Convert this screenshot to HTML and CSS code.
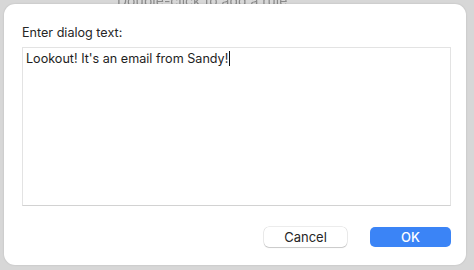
FILE: index.html
```html
<!DOCTYPE html>
<html lang="en">
<head>
    <meta charset="UTF-8">
    <title>Enter dialog text</title>
    <link rel="stylesheet" href="styles.css">
</head>
<body>
    <div class="backdrop-text">Double-click to add a rule.</div>
    <div class="dialog">
        <label class="prompt" for="dialog-text">Enter dialog text:</label>
        <div class="text-box" id="dialog-text">Lookout! It's an email from Sandy!<span class="caret"></span></div>
        <div class="buttons">
            <button type="button" class="cancel-btn">Cancel</button>
            <button type="button" class="ok-btn">OK</button>
        </div>
    </div>
</body>
</html>
```

FILE: styles.css
```css
body {
    margin: 0;
    width: 474px;
    height: 270px;
    overflow: hidden;
    background-color: #d7d7d7;
    font-family: Inter, "Noto Sans", sans-serif;
    position: relative;
}
.backdrop-text {
    position: absolute;
    top: -8px;
    left: 117px;
    font-size: 14px;
    color: #8a8a8a;
    filter: blur(0.6px);
}
.dialog {
    position: relative;
    margin: 4px 8px 0 4px;
    height: 261px;
    background-color: #fff;
    border-radius: 11px;
    box-shadow: 0 0 2px rgba(0, 0, 0, 0.15);
    padding: 0 15px 0 18px;
    box-sizing: border-box;
}
.prompt {
    display: block;
    padding-top: 21px;
    font-size: 12.6px;
    color: #262626;
    height: 22px;
    line-height: 16px;
}
.text-box {
    height: 159px;
    border: 1px solid #e3e3e3;
    border-bottom-color: #d2d2d2;
    padding: 3px 3px;
    box-sizing: border-box;
    font-size: 12.6px;
    line-height: 16px;
    color: #1e1e1e;
}
.caret {
    display: inline-block;
    width: 1px;
    height: 15px;
    margin-left: 1px;
    background-color: #111;
    vertical-align: -3px;
}
.buttons {
    display: flex;
    justify-content: flex-end;
    gap: 23px;
    padding-top: 21px;
}
.buttons button {
    font-family: Inter, "Noto Sans", sans-serif;
    font-size: 13px;
    height: 20px;
    border-radius: 5px;
    border: none;
    padding: 0;
}
.cancel-btn {
    width: 83px;
    background-color: #fff;
    color: #262626;
    box-shadow: 0 0 0 0.5px rgba(0, 0, 0, 0.15), 0 1px 1px rgba(0, 0, 0, 0.15);
}
.ok-btn {
    width: 81px;
    background-color: #3b84f6;
    color: #fff;
    font-weight: 500;
}
```
